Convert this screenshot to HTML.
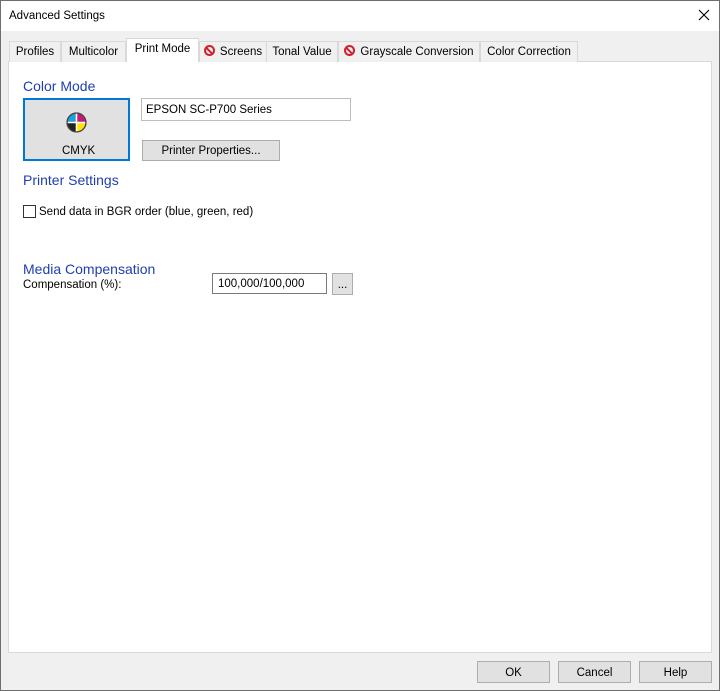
<!DOCTYPE html><html><head><style>
*{margin:0;padding:0;box-sizing:border-box}
body{width:720px;height:691px;background:#f0f0f0;font-family:"Liberation Sans",sans-serif;font-size:11.5px;color:#000;position:relative;overflow:hidden}
.a{position:absolute}
.tab{position:absolute;top:41px;height:21px;border:1px solid #d9d9d9;border-bottom:none;background:#f0f0f0;line-height:20px;text-align:center;white-space:nowrap;font-size:11.5px}
.h{color:#1f3fb0;font-size:14px}
.btn{position:absolute;background:#e1e1e1;border:1px solid #adadad;text-align:center;font-size:11.5px}
.no{display:inline-block;width:11px;height:11px;border:2px solid #d0202a;border-radius:50%;position:relative;vertical-align:-1px;margin-right:5px}
.no:after{content:"";position:absolute;left:-1px;top:2.5px;width:9px;height:2px;background:#d0202a;transform:rotate(45deg)}
</style></head><body>
<div class="a" style="left:0;top:0;width:720px;height:31px;background:#fff"></div>
<div class="a" style="left:9px;top:10px">Advanced Settings</div>
<svg class="a" style="left:698px;top:9px" width="12" height="12"><path d="M1 1L11 11M11 1L1 11" stroke="#000" stroke-width="1.1"/></svg>
<div class="a" style="left:8px;top:61px;width:704px;height:592px;background:#fff;border:1px solid #d9d9d9"></div>
<div class="tab" style="left:9px;width:52px">Profiles</div>
<div class="tab" style="left:61px;width:65px">Multicolor</div>
<div class="tab" style="left:266px;width:72px">Tonal Value</div>
<div class="tab" style="left:199px;width:68px"><span class="no"></span>Screens</div>
<div class="tab" style="left:338px;width:142px"><span class="no"></span>Grayscale Conversion</div>
<div class="tab" style="left:480px;width:98px">Color Correction</div>
<div class="tab" style="left:126px;top:38px;width:73px;height:24px;background:#fff;line-height:21px">Print Mode</div>
<div class="a h" style="left:23px;top:78px">Color Mode</div>
<div class="a" style="left:23px;top:98px;width:107px;height:63px;background:#e1e1e1;border:2px solid #0078d7"></div>
<svg class="a" style="left:66px;top:112px" width="21" height="21" viewBox="0 0 20 20"><path d="M10 10V1A9 9 0 0 0 1 10Z" fill="#1ea0d8"/><path d="M10 10V1A9 9 0 0 1 19 10Z" fill="#c8187a"/><path d="M10 10H19A9 9 0 0 1 10 19Z" fill="#ffe400"/><path d="M10 10H1A9 9 0 0 0 10 19Z" fill="#222"/><path d="M10 0V20M0 10H20" stroke="#fff" stroke-width="1.5"/><circle cx="10" cy="10" r="9" fill="none" stroke="#444" stroke-width="1.3"/></svg>
<div class="a" style="left:62px;top:145px">CMYK</div>
<div class="a" style="left:141px;top:98px;width:210px;height:23px;border:1px solid #bdbdbd;background:#fff;padding:5px 4px">EPSON SC-P700 Series</div>
<div class="btn" style="left:142px;top:140px;width:138px;height:21px;line-height:21px">Printer Properties...</div>
<div class="a h" style="left:23px;top:172px">Printer Settings</div>
<div class="a" style="left:23px;top:205px;width:13px;height:13px;border:1px solid #333;background:#fff"></div>
<div class="a" style="left:39px;top:206px">Send data in BGR order (blue, green, red)</div>
<div class="a h" style="left:23px;top:261px">Media Compensation</div>
<div class="a" style="left:23px;top:279px">Compensation (%):</div>
<div class="a" style="left:212px;top:273px;width:115px;height:21px;border:1px solid #7a7a7a;background:#fff;padding:4px 5px">100,000/100,000</div>
<div class="btn" style="left:332px;top:273px;width:21px;height:22px;line-height:22px">...</div>
<div class="btn" style="left:477px;top:661px;width:73px;height:22px;line-height:22px">OK</div>
<div class="btn" style="left:558px;top:661px;width:73px;height:22px;line-height:22px">Cancel</div>
<div class="btn" style="left:639px;top:661px;width:73px;height:22px;line-height:22px">Help</div>
<div class="a" style="left:0;top:0;width:720px;height:691px;border:1px solid #6e6e6e"></div>
</body></html>
